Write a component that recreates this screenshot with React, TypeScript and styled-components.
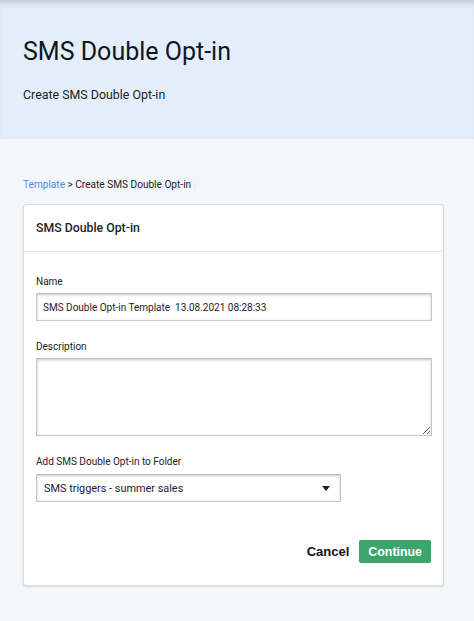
import React from "react";
import styled, { createGlobalStyle } from "styled-components";

const GlobalStyle = createGlobalStyle`
  html, body {
    margin: 0;
    padding: 0;
    background: #f4f7fa;
    font-family: Roboto, "Liberation Sans", Arial, sans-serif;
    color: #1d2227;
  }
`;

const Page = styled.div`
  width: 474px;
  min-height: 621px;
  display: flex;
  flex-direction: column;
  background: #f4f7fa;
`;

const Header = styled.header`
  height: 139px;
  box-sizing: border-box;
  padding: 36px 23px 0;
  background: #e3eefa;
  box-shadow: inset 0 7px 6px -4px rgba(120, 135, 150, 0.35);
`;

const Title = styled.h1`
  margin: 0;
  font-size: 25px;
  font-weight: 400;
  line-height: 32px;
  color: #10161c;
`;

const Subtitle = styled.p`
  margin: 19px 0 0;
  font-size: 12.4px;
  line-height: 16px;
  color: #1a1f24;
`;

const Main = styled.main`
  padding: 38px 30px 0 23px;
`;

const Breadcrumb = styled.nav`
  font-size: 10.1px;
  line-height: 16px;
  color: #1d2227;
  white-space: nowrap;
`;

const Crumb = styled.a`
  color: #4a8fe0;
  text-decoration: none;
`;

const Faint = styled.span`
  color: #dde2e7;
  font-size: 7px;
  margin-left: 3px;
`;

const Card = styled.section`
  margin-top: 10px;
  background: #fff;
  border: 1px solid #d7dce2;
  border-radius: 3px;
  box-shadow: 0 1px 2px rgba(0, 0, 0, 0.12);
`;

const CardHeader = styled.div`
  height: 46px;
  display: flex;
  align-items: center;
  padding: 0 12px;
  border-bottom: 1px solid #dfe3e7;
  font-size: 12.3px;
  font-weight: 500;
  color: #1a1f24;
`;

const CardBody = styled.div`
  padding: 23px 12px 22px;
  display: flex;
  flex-direction: column;
`;

const Label = styled.label<{ $gap?: number }>`
  display: block;
  margin-top: ${(p) => p.$gap ?? 0}px;
  font-size: 10px;
  line-height: 14px;
  color: #1d2227;
`;

const fieldBox = `
  box-sizing: border-box;
  border: 1px solid #c4c8cc;
  border-top-color: #b9bdc1;
  border-radius: 1px;
  background: #fff;
  box-shadow: inset 0 1px 3px rgba(0, 0, 0, 0.22);
  font-family: Roboto, "Liberation Sans", Arial, sans-serif;
  font-size: 10px;
  color: #1d2227;
`;

const Input = styled.input`
  ${fieldBox}
  margin-top: 4px;
  width: 396px;
  height: 28px;
  padding: 0 6px;
  outline: none;
`;

const TextArea = styled.textarea`
  ${fieldBox}
  margin-top: 4px;
  width: 396px;
  height: 78px;
  padding: 6px;
  resize: vertical;
  outline: none;
  display: block;
`;

const Select = styled.div`
  ${fieldBox}
  margin-top: 5px;
  width: 305px;
  height: 28px;
  padding: 0 8px 0 7px;
  display: flex;
  align-items: center;
  justify-content: space-between;
  font-size: 10.9px;
`;

const Caret = styled.span`
  width: 0;
  height: 0;
  border-left: 4.5px solid transparent;
  border-right: 4.5px solid transparent;
  border-top: 5px solid #1d2227;
  margin-right: 2px;
`;

const Actions = styled.div`
  margin-top: 38px;
  display: flex;
  justify-content: flex-end;
  align-items: center;
  gap: 10px;
`;

const Button = styled.button<{ $primary?: boolean }>`
  height: 23px;
  padding: ${(p) => (p.$primary ? "0 9px" : "0")};
  border: none;
  border-radius: 2px;
  font-family: "Liberation Sans", Arial, sans-serif;
  font-weight: 700;
  font-size: ${(p) => (p.$primary ? "12.4px" : "13px")};
  background: ${(p) => (p.$primary ? "#3ca66a" : "transparent")};
  color: ${(p) => (p.$primary ? "#ffffff" : "#111")};
  cursor: pointer;
`;

const App: React.FC = () => {
  return (
    <Page>
      <GlobalStyle />
      <Header>
        <Title>SMS Double Opt-in</Title>
        <Subtitle>Create SMS Double Opt-in</Subtitle>
      </Header>
      <Main>
        <Breadcrumb>
          <Crumb href="#">Template</Crumb> &gt; Create SMS Double Opt-in
          <Faint>|</Faint>
        </Breadcrumb>
        <Card>
          <CardHeader>SMS Double Opt-in</CardHeader>
          <CardBody>
            <Label>Name</Label>
            <Input defaultValue="SMS Double Opt-in Template  13.08.2021 08:28:33" />
            <Label $gap={19}>Description</Label>
            <TextArea />
            <Label $gap={19}>Add SMS Double Opt-in to Folder</Label>
            <Select>
              <span>SMS triggers - summer sales</span>
              <Caret />
            </Select>
            <Actions>
              <Button>Cancel</Button>
              <Button $primary>Continue</Button>
            </Actions>
          </CardBody>
        </Card>
      </Main>
    </Page>
  );
};

export default App;
